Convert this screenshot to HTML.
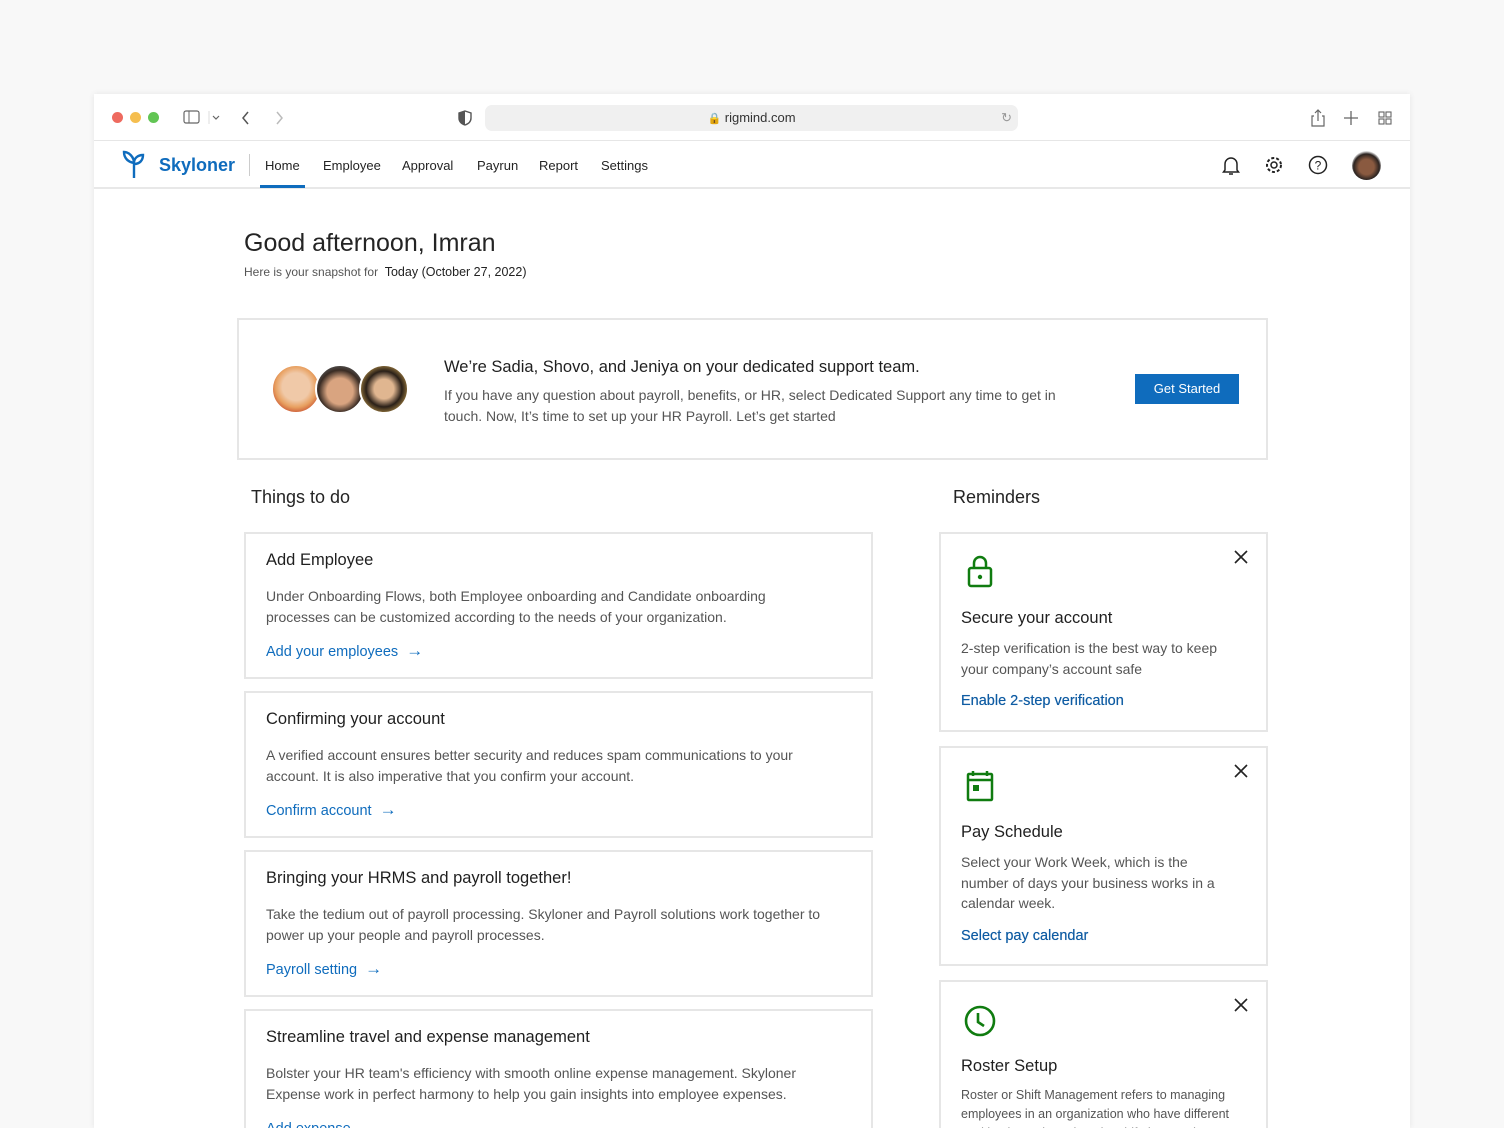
<!DOCTYPE html>
<html style="overflow:hidden;height:1128px"><head><meta charset="utf-8"><style>
*{box-sizing:border-box;margin:0;padding:0}
body{width:1504px;height:1128px;overflow:hidden;background:#f8f8f8;font-family:"Liberation Sans",sans-serif;color:#242424;position:relative}
.win{position:absolute;left:94px;top:94px;width:1316px;height:1034px;background:#fff;box-shadow:0 0 6px rgba(0,0,0,.08);overflow:hidden}
.abs{position:absolute}
.tb{position:absolute;left:0;top:0;width:1316px;height:47px;border-bottom:1px solid #e6e6e6}
.dot{position:absolute;top:18px;width:11px;height:11px;border-radius:50%}
.url{position:absolute;left:391px;top:11px;width:533px;height:26px;background:#f0f0f0;border-radius:7px;font-size:13px;text-align:center;line-height:26px;color:#333}
.nav{position:absolute;left:0;top:47px;width:1316px;height:48px;border-bottom:2px solid #e8e8e8}
.nav a{position:absolute;top:17px;font-size:13px;color:#242424}
.card{position:absolute;border:2px solid #e6e6e6;background:#fff}
.h{font-size:16.5px;color:#1f1f1f}
.p{font-size:14px;color:#555;line-height:21px}
.lk{font-size:14.5px;color:#0f6cbd}
.lk .ar{font-size:17px}
.lk2{font-size:14.5px;color:#0f5ca3;text-shadow:0 0 .4px #0f5ca3}
.x{position:absolute;right:18px;top:16px}
</style></head><body>
<div class="win">
 <div class="tb">
  <div class="dot" style="left:18px;background:#ee6a5f"></div>
  <div class="dot" style="left:36px;background:#f5be4f"></div>
  <div class="dot" style="left:54px;background:#62c554"></div>
  <svg class="abs" style="left:89px;top:16px" width="40" height="16"><rect x="1" y="1" width="15" height="12" rx="2" fill="none" stroke="#666" stroke-width="1.2"/><line x1="6" y1="1" x2="6" y2="13" stroke="#666"/><line x1="26" y1="1" x2="26" y2="14" stroke="#ddd"/><path d="M30 6l3 3 3-3" fill="none" stroke="#666" stroke-width="1.2"/></svg>
  <svg class="abs" style="left:146px;top:16px" width="50" height="16"><path d="M8 2l-5 6 5 6" fill="none" stroke="#555" stroke-width="1.5"/><path d="M37 2l5 6-5 6" fill="none" stroke="#bbb" stroke-width="1.5"/></svg>
  <svg class="abs" style="left:364px;top:16px" width="14" height="16"><path d="M7 1l6 2v5c0 4-3 6-6 7-3-1-6-3-6-7V3z" fill="none" stroke="#555" stroke-width="1.4"/><path d="M7 1v14c-3-1-6-3-6-7V3z" fill="#555"/></svg>
  <div class="url"><span style="color:#1a8a2a;font-size:11px">🔒</span> rigmind.com<span style="position:absolute;right:6px;color:#999">↻</span></div>
  <svg class="abs" style="left:1216px;top:14px" width="100" height="20"><path d="M4 8H2v10h12V8h-2M8 13V2M5 5l3-3 3 3" fill="none" stroke="#666" stroke-width="1.2"/><path d="M41 3v14M34 10h14" stroke="#666" stroke-width="1.3"/><g fill="none" stroke="#666" stroke-width="1.1"><rect x="69" y="4" width="5" height="5"/><rect x="76" y="4" width="5" height="5"/><rect x="69" y="11" width="5" height="5"/><rect x="76" y="11" width="5" height="5"/></g></svg>
 </div>
 <div class="nav">
  <svg class="abs" style="left:28px;top:8px" width="30" height="30"><path d="M12 29V14M12 14C12 8 7 3 2 3c0 6 4 10 10 11zM12 14c0-5 4-8 9-8 0 5-3 9-9 9" fill="none" stroke="#0f6cbd" stroke-width="2.4"/></svg>
  <div class="abs" style="left:65px;top:14px;font-size:18px;font-weight:bold;color:#0f6cbd">Skyloner</div>
  <div class="abs" style="left:155px;top:13px;width:1px;height:22px;background:#ccc"></div>
  <a style="left:171px">Home</a><a style="left:229px">Employee</a><a style="left:308px">Approval</a><a style="left:383px">Payrun</a><a style="left:445px">Report</a><a style="left:507px">Settings</a>
  <div class="abs" style="left:166px;top:44px;width:45px;height:3px;background:#0f6cbd"></div>
  <svg class="abs" style="left:1126px;top:14px" width="170" height="22"><path d="M5 15V9a6 6 0 0112 0v6l1.5 2h-15zM9 19h4" fill="none" stroke="#222" stroke-width="1.5"/><circle cx="54" cy="10" r="3" fill="none" stroke="#222" stroke-width="1.5"/><circle cx="54" cy="10" r="7" fill="none" stroke="#222" stroke-width="2" stroke-dasharray="3 2"/><circle cx="98" cy="10" r="8.5" fill="none" stroke="#222" stroke-width="1.5"/><text x="98" y="14.5" font-size="12" text-anchor="middle" font-family="Liberation Sans" fill="#222">?</text></svg>
  <div class="abs" style="left:1258px;top:10px;width:29px;height:29px;border-radius:50%;background:radial-gradient(circle at 50% 55%,#8a5a40 35%,#2b2320 60%,#ddd 72%)"></div>
 </div>
 <div class="abs" style="left:150px;top:135px;font-size:25px;color:#242424">Good afternoon, Imran</div>
 <div class="abs" style="left:150px;top:171px;font-size:12px;color:#555">Here is your snapshot for &nbsp;<span style="color:#222;font-size:12.5px">Today (October 27, 2022)</span></div>
 <div class="card" style="left:143px;top:224px;width:1031px;height:142px">
  <div class="abs" style="left:32px;top:44px;width:50px;height:50px;border-radius:50%;background:radial-gradient(circle at 50% 45%,#f0c9a8 40%,#e8a060 60%,#c75030 80%);border:2px solid #fff"></div>
  <div class="abs" style="left:76px;top:44px;width:50px;height:50px;border-radius:50%;background:radial-gradient(circle at 50% 55%,#d9a480 38%,#3a2c24 62%,#555 80%);border:2px solid #fff"></div>
  <div class="abs" style="left:120px;top:44px;width:50px;height:50px;border-radius:50%;background:radial-gradient(circle at 50% 50%,#e0b690 30%,#2a2018 55%,#c9a050 85%);border:2px solid #fff"></div>
  <div class="abs" style="left:205px;top:38px;font-size:16.5px;color:#1f1f1f">We’re Sadia, Shovo, and Jeniya on your dedicated support team.</div>
  <div class="abs p" style="left:205px;top:65px;width:645px">If you have any question about payroll, benefits, or HR, select Dedicated Support any time to get in touch. Now, It’s time to set up your HR Payroll. Let’s get started</div>
  <div class="abs" style="left:896px;top:54px;width:104px;height:30px;background:#0f6cbd;color:#fff;font-size:13px;text-align:center;line-height:30px">Get Started</div>
 </div>
 <div class="abs" style="left:157px;top:393px;font-size:18px">Things to do</div>
 <div class="abs" style="left:859px;top:393px;font-size:18px">Reminders</div>

 <div class="card" style="left:150px;top:438px;width:629px;height:147px"><div class="abs h" style="left:20px;top:17px">Add Employee</div><div class="abs p" style="left:20px;top:52px;width:540px">Under Onboarding Flows, both Employee onboarding and Candidate onboarding processes can be customized according to the needs of your organization.</div><div class="abs lk" style="left:20px;top:107px">Add your employees &nbsp;<span class="ar">→</span></div></div>
 <div class="card" style="left:150px;top:597px;width:629px;height:147px"><div class="abs h" style="left:20px;top:17px">Confirming your account</div><div class="abs p" style="left:20px;top:52px;width:570px">A verified account ensures better security and reduces spam communications to your account. It is also imperative that you confirm your account.</div><div class="abs lk" style="left:20px;top:107px">Confirm account &nbsp;<span class="ar">→</span></div></div>
 <div class="card" style="left:150px;top:756px;width:629px;height:147px"><div class="abs h" style="left:20px;top:17px">Bringing your HRMS and payroll together!</div><div class="abs p" style="left:20px;top:52px;width:560px">Take the tedium out of payroll processing. Skyloner and Payroll solutions work together to power up your people and payroll processes.</div><div class="abs lk" style="left:20px;top:107px">Payroll setting &nbsp;<span class="ar">→</span></div></div>
 <div class="card" style="left:150px;top:915px;width:629px;height:147px"><div class="abs h" style="left:20px;top:17px">Streamline travel and expense management</div><div class="abs p" style="left:20px;top:52px;width:560px">Bolster your HR team's efficiency with smooth online expense management. Skyloner Expense work in perfect harmony to help you gain insights into employee expenses.</div><div class="abs lk" style="left:20px;top:107px">Add expense &nbsp;<span class="ar">→</span></div></div>

 <div class="card" style="left:845px;top:438px;width:329px;height:200px">
  <svg class="abs" style="left:24px;top:20px" width="30" height="36"><path d="M9 14V9a6 6 0 0112 0v5" fill="none" stroke="#107c10" stroke-width="2.5"/><rect x="4" y="14" width="22" height="18" rx="2" fill="none" stroke="#107c10" stroke-width="2.5"/><circle cx="15" cy="23" r="2.2" fill="#107c10"/></svg>
  <svg class="x" width="14" height="14"><path d="M1 1l12 12M13 1L1 13" stroke="#222" stroke-width="1.6"/></svg>
  <div class="abs h" style="left:20px;top:75px">Secure your account</div><div class="abs p" style="left:20px;top:104px;width:275px">2-step verification is the best way to keep your company’s account safe</div><div class="abs lk2" style="left:20px;top:159px">Enable 2-step verification</div>
 </div>
 <div class="card" style="left:845px;top:652px;width:329px;height:220px">
  <svg class="abs" style="left:24px;top:22px" width="30" height="34"><path d="M8 1v5M22 1v5" stroke="#107c10" stroke-width="2.5"/><rect x="3" y="4" width="24" height="26" rx="1" fill="none" stroke="#107c10" stroke-width="2.5"/><line x1="3" y1="10" x2="27" y2="10" stroke="#107c10" stroke-width="2.5"/><rect x="8" y="15" width="6" height="6" fill="#107c10"/></svg>
  <svg class="x" width="14" height="14"><path d="M1 1l12 12M13 1L1 13" stroke="#222" stroke-width="1.6"/></svg>
  <div class="abs h" style="left:20px;top:75px">Pay Schedule</div><div class="abs p" style="left:20px;top:104px;width:260px;line-height:20.5px">Select your Work Week, which is the number of days your business works in a calendar week.</div><div class="abs lk2" style="left:20px;top:180px">Select pay calendar</div>
 </div>
 <div class="card" style="left:845px;top:886px;width:329px;height:220px">
  <svg class="abs" style="left:22px;top:22px" width="34" height="34"><circle cx="17" cy="17" r="14" fill="none" stroke="#107c10" stroke-width="2.6"/><path d="M15 9v9l6 4" fill="none" stroke="#107c10" stroke-width="2.6"/></svg>
  <svg class="x" width="14" height="14"><path d="M1 1l12 12M13 1L1 13" stroke="#222" stroke-width="1.6"/></svg>
  <div class="abs h" style="left:20px;top:75px">Roster Setup</div><div class="abs p" style="left:20px;top:104px;width:285px;font-size:12.5px;line-height:19px">Roster or Shift Management refers to managing employees in an organization who have different working hours based on the shift they are in.</div>
 </div>
</div>
</body></html>
